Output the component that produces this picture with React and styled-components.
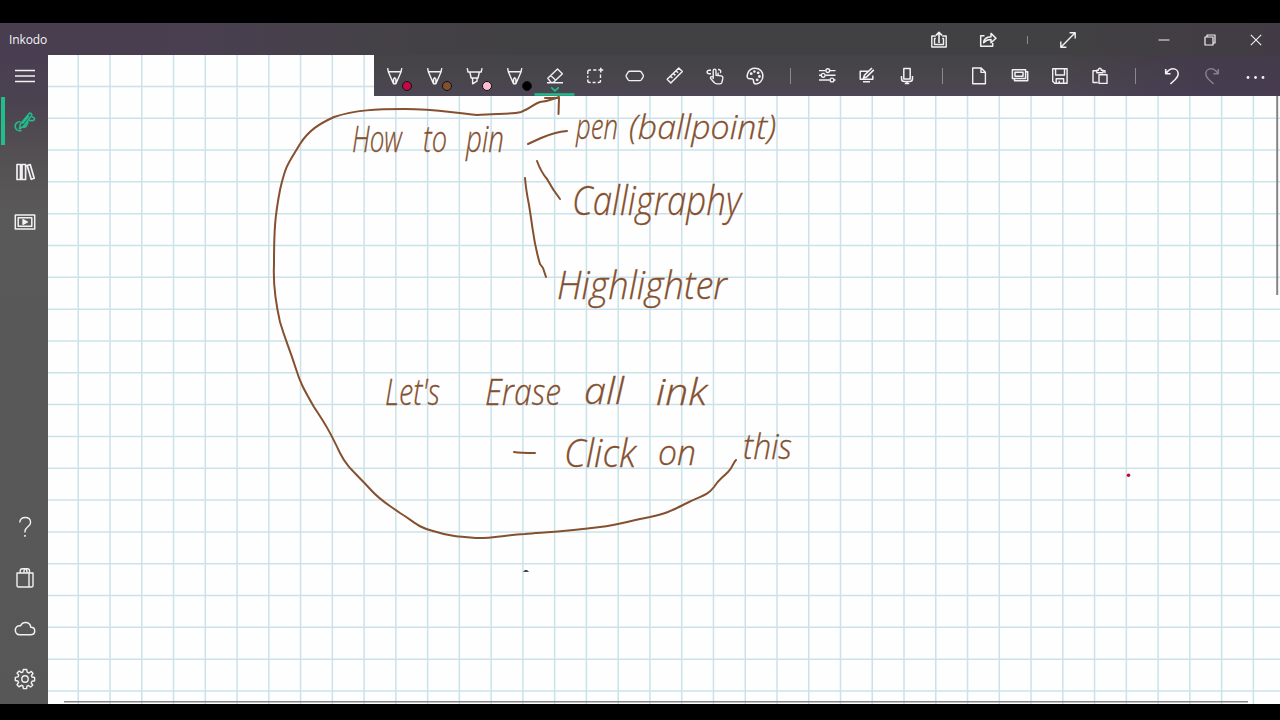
import styled, { createGlobalStyle } from 'styled-components'

const colors = {
  accent: '#22bd8d',
  ink: '#85502f',
  icon: '#f1f0f2',
  grid: '#cbe2ea',
}

const GlobalStyle = createGlobalStyle`
  body {
    margin: 0;
    background: #000;
    overflow: hidden;
  }
`

const Screen = styled.div`
  box-sizing: border-box;
  width: 1280px;
  height: 720px;
  padding: 23px 0 16px;
  display: flex;
  flex-direction: column;
  background: #000;
  font-family: 'Open Sans', 'Noto Sans', sans-serif;
`

const TitleBar = styled.header`
  display: flex;
  align-items: center;
  box-sizing: border-box;
  height: 32px;
  padding-top: 1px;
  flex: none;
  background: linear-gradient(90deg, #493d50 0, #493f50 200px, #454148 360px, #414042 520px, #414042 1080px, #423b45 1280px);
`

const AppName = styled.h1`
  flex: 1;
  margin: 0;
  padding: 0 0 0 9px;
  color: #f4f2f5;
  font-size: 12px;
  font-weight: 400;
  letter-spacing: -0.1px;
`

const WindowActions = styled.div`
  display: flex;
  align-items: center;
  margin-right: ${({ $gap }) => $gap || 0}px;
`

const Body = styled.div`
  display: flex;
  flex: 1;
  min-height: 0;
`

const Sidebar = styled.nav`
  display: flex;
  flex-direction: column;
  justify-content: space-between;
  box-sizing: border-box;
  width: 48px;
  flex: none;
  background: linear-gradient(180deg, #493e51 0, #4b4350 50px, #545153 105px, #5a5959 160px, #575757 100%);
`

const NavGroup = styled.div`
  display: flex;
  flex-direction: column;
`

const NavButton = styled.button`
  box-sizing: border-box;
  display: flex;
  align-items: center;
  justify-content: center;
  width: 48px;
  height: ${({ $height }) => $height || 51}px;
  padding: 0 2px 0 0;
  border: 0;
  border-left: 4px solid transparent;
  background: ${({ $active }) =>
    $active ? `linear-gradient(${colors.accent}, ${colors.accent}) 1px 1px / 4px 48px no-repeat border-box` : 'none'};
  color: ${({ $active }) => ($active ? colors.accent : colors.icon)};
`

const Canvas = styled.main`
  position: relative;
  flex: 1;
  min-width: 0;
  display: flex;
  justify-content: flex-end;
  align-items: flex-start;
  background: #fefefe;
`

const Page = styled.svg`
  position: absolute;
  inset: 0;
`

const Handwriting = styled.text`
  font-family: 'Open Sans', 'Lato', sans-serif;
  font-style: italic;
  font-weight: 300;
  font-size: ${({ $size }) => $size}px;
  fill: ${colors.ink};
  stroke: ${colors.ink};
  stroke-width: 0.3px;
`

const Toolbar = styled.div`
  position: relative;
  display: flex;
  align-items: center;
  box-sizing: border-box;
  width: 906px;
  height: 41px;
  padding-left: 1px;
  background: linear-gradient(90deg, transparent 680px, rgba(66, 48, 80, 0.45) 820px),
    linear-gradient(180deg, #444345 0, #48454b 50%, #4c4754 100%);
`

const ToolButton = styled.button`
  display: flex;
  align-items: center;
  justify-content: center;
  width: ${({ $width }) => $width || 40}px;
  height: 40px;
  flex: none;
  padding: 0;
  border: 0;
  background: none;
  color: ${({ $muted }) => ($muted ? '#85808a' : colors.icon)};
`

const Separator = styled.span`
  width: 1px;
  height: ${({ $height }) => $height || 16}px;
  flex: none;
  margin: 0 16px 0 15px;
  background: #8b888e;
`

const Glyph = styled.svg`
  flex: none;
  overflow: visible;
  fill: none;
  stroke: currentColor;
  stroke-width: 1.4;
  stroke-linejoin: round;
`

// every icon is drawn on a 40x40 board with its origin in the middle
function Icon({ children }) {
  return (
    <Glyph width="40" height="40" viewBox="-20 -20 40 40">
      {children}
    </Glyph>
  )
}

function Pen({ color }) {
  return (
    <Icon>
      <path d="M-7.4-7.8-6.6-4 -1.5 7.8H.9L6-4 6.8-7.8M-6.8-4.3H6.2M-1.5 7.5V3.2L-.3 1.8 .9 3.2V7.5" />
      <circle cx="12" cy="10" r="4.5" fill={color} stroke="#111" strokeWidth="1" />
    </Icon>
  )
}

function Marker({ color }) {
  return (
    <Icon>
      <path d="M-7.8-7.8-7-4H6.2L7-7.8M-5.2-4-3.8 2H3L4.4-4M-2.4 2V7.8L2 5.2V2" />
      <circle cx="12" cy="10" r="4.5" fill={color} stroke="#111" strokeWidth="1" />
    </Icon>
  )
}

const icons = {
  menu: <path d="M-10-5.500H10M-10 0H10M-10 5.500H10" />,
  ink: (
    <g strokeWidth="1.6">
      <path d="M-5.5 6.7-4.8 2.6 4-8.2C5.3-9.7 7.700-7.8 6.5-6.2L-2 4.8ZM-2.5 1.4 3.8-6" />
      <path d="M-4.5-.2C-8-.5-10 2-9.8 4.6-9.5 8-6.5 9.2-3.5 8.6M-2 5C1 6.2 1.7 3 3.2-.4M3.8-1.5C6-1.8 8.8-.5 9.4-2.2 10-4 8-5 6.8-5.2" />
    </g>
  ),
  library: <path d="M-8-7.500H-4.500V7.500H-8ZM-3-7.500H.6V7.500H-3ZM2.2-6.500 5.2-7.500 9.2 6.300 6.2 7.300Z" strokeWidth="1.7" />,
  video: (
    <>
      <path d="M-9.7-7H9.7V7H-9.7ZM-6.8-4.2H6.8V4.2H-6.8Z" strokeWidth="1.5" />
      <path d="M-2-2.3V2.3L2.5 0Z" fill="currentColor" />
    </>
  ),
  help: (
    <>
      <path d="M-5.3-4.5C-5-7.5-3-9.5.2-9.5 3.5-9.5 5.6-7.4 5.6-4.6 5.6-.8 0 .2 0 4V5.5" />
      <path d="M0 8V9.8" strokeWidth="1.6" />
    </>
  ),
  bag: <path d="M-8-5H8V7.500Q8 9 6.500 9H-6.500Q-8 9-8 7.500ZM4-5V9M-4.8-5V-7Q-4.800-9.200-2.800-9.200H2.5Q4.5-9.200 4.5-7V-5M-1-5V-7Q-1-9 .5-9.200M.8-9Q2-8.500 2-5" />,
  cloud: <path d="M-5.5 5.7H5.5C8 5.7 9.7 4.1 9.7 1.9S8-1.7 5.9-1.7C5.4-4.9 3-6.6.5-6.6-2-6.6-3.7-5.2-4.4-3.2-7.6-3.7-9.7-1.5-9.7 1.1S-7.9 5.7-5.5 5.7Z" strokeWidth="1.5" />,
  settings: (
    <>
      <path d="M-1.7-9.5H1.7L2.2-6.8 4-6 6.3-7.6 8-5.5 6.5-3.5 7-2 9.6-1.5V1.7L7 2.2 6.2 4 7.7 6.2 5.6 8 3.5 6.5 2 7.1 1.6 9.6H-1.6L-2.1 7-3.7 6.3-6 7.8-8 5.7-6.4 3.5-7.1 2-9.7 1.5V-1.6L-7-2.1-6.3-3.8-7.9-6-5.8-8-3.6-6.4-2.2-7Z" />
      <circle r="3.2" />
    </>
  ),
  export: (
    <>
      <path d="M-3.2-4H-7.2V7H7.2V-4H3.2M-3.2-1.5H-4.5V4.5H4.5V-1.5H3.2" />
      <path d="M0 3V-7.5M-3-4.6 0-7.6 3-4.6" strokeWidth="1.6" />
    </>
  ),
  share: <path d="M-3.5-4.3H-7.3V6.3H4.7V3M-4.4 2.7C-4.1-1.2-1.5-3.2 3-3.3V-6.6L8-1.8 3 2.8V-.4C-.2-.4-2.4.5-4.4 2.7Z" strokeWidth="1.5" />,
  expand: <path d="M-7.2 7.2 7.2-7.2M1.6-7.2H7.2V-1.6M-7.2 1.6V7.2H-1.6" />,
  minimize: <path d="M-5.5 0H5.5" strokeWidth="1" />,
  restore: <path d="M-5-3H3V5H-5ZM-3-3V-5H5V3H3" strokeWidth="1.2" />,
  close: <path d="M-5.2-5.2 5.2 5.2M5.2-5.2-5.2 5.2" strokeWidth="1.1" />,
  eraser: (
    <>
      <path d="M-7.2 2.3 2.5-7 7.4-2.2-1.7 6.4H-4ZM-4.4-.4.8 4.2M-8 6.7H8" />
      <path d="M-3.8 11.4 0 14.8 3.8 11.4" stroke={colors.accent} strokeWidth="1.6" />
      <path d="M-20.500 18.5H19.500" stroke={colors.accent} strokeWidth="2.5" />
    </>
  ),
  select: (
    <>
      <path d="M-7.2-2V-4.2Q-7.2-6-5.4-6H-4M-1.8-6H1.4M5.5-1.4V2M5.5 4V4.7Q5.5 6.5 3.7 6.5H2.7M.6 6.5H-2.4M-4.4 6.5H-5.4Q-7.2 6.5-7.2 4.7V3.6M-7.2 1.8V-.2" />
      <path d="M5.8-8.2V-3.5M3.5-5.9H8.2" strokeWidth="1.5" />
    </>
  ),
  shape: <path d="M-5.2-4.8H4.7Q5.7-4.8 6.3-4L8.2-.8Q8.6 0 8.2.8L6.3 3.8Q5.7 4.6 4.7 4.6H-5.2Q-6.2 4.6-6.8 3.8L-8.7.8Q-9.1 0-8.7-.8L-6.8-4Q-6.2-4.8-5.2-4.8Z" />,
  ruler: <path d="M-7.8 3.3 3.8-8 7.3-4.5-4.2 7ZM-4.5.2-2.5 2M-1.7-2.6.3-.6M1.1-5.2 3-3.3" strokeWidth="1.5" />,
  touch: (
    <path d="M-1.8 3V-5.3C-1.8-7.4 1-7.4 1-5.3V-.8L6-.1C7.6.1 8 .9 7.8 2.4L7 6.2Q6.6 7.9 4.9 7.9H1.8Q.3 7.9-.6 6.7L-4.3 2.5C-5.2 1.2-3.6.1-2.4 1M-4-2.3H-5.8C-8.6-2.3-8.6-5.8-5.8-5.8H-4M3-6.5H3.5C5.8-6.5 6.2-4.2 5.3-3M3.1-3.2V-.8" />
  ),
  palette: (
    <>
      <path d="M0-7.8C5-7.8 7.9-4.4 7.9-.2 7.9 4.8 4.2 7.9.9 7.9-2.2 7.9-1.2 5.3-1.7 3.8-2.4 1.6-4.5 3.2-6.3 2.6-8.1 2-8-.4-7.3-2.6-6.3-5.7-3.7-7.8 0-7.8Z" strokeWidth="1.5" />
      <g fill="currentColor" stroke="none">
        <circle cx="-3.8" cy="-2.3" r="1.4" />
        <circle cx="-.6" cy="-4.5" r="1.3" />
        <circle cx="3.2" cy="-3.2" r="1.4" />
        <circle cx="4.4" cy=".5" r="1.4" />
        <circle cx="2.2" cy="3.8" r="1.4" />
      </g>
    </>
  ),
  sliders: (
    <>
      <path d="M-8-5.4H-1.5M3-5.4H8.5M-8-.7H-5.5M-1.5-.7H8.5M-8 4H2.7M7 4H8.5" />
      <circle cx=".8" cy="-5.4" r="1.9" />
      <circle cx="-3.8" cy="-.7" r="1.9" />
      <circle cx="5" cy="4" r="1.9" />
    </>
  ),
  screenPen: (
    <>
      <path d="M1.5-4.8H-6.8V3.3H5.8V-.5M-4 5.7H3" strokeWidth="1.5" />
      <path d="M6.8-6.2-.4 1-3.6 2.2-2.4-1 5-8" strokeWidth="1.7" />
    </>
  ),
  mic: <path d="M-3.2-7.5H3.2V3H-3.2ZM-5.5 0V2.5Q-5.5 5.6-2.5 5.6H2.5Q5.5 5.6 5.5 2.5V0M-2.2 7.6H2.2M0 5.6V7.6" strokeWidth="1.5" />,
  file: <path d="M-6.3-8H2.2L6.4-3.8V7.7H-6.3ZM2-8V-3.6H6.3" />,
  layers: <path d="M-7.6-6.2H5.6V2.6H-7.6ZM-5-3.8H3V.2H-5ZM5.6-4.3H7.7V4.8H-5.5V2.6" strokeWidth="1.5" />,
  save: <path d="M-7.3-7.2H7.1V7.2H-5.3L-7.3 5.2ZM-4.4-7V-1H4.5V-7M-3.8 7V2.8H3.6V7M-.8 4.8V7" />,
  paste: <path d="M-2.2 6.5H-7V-5.2H-3.2M3-5.2H5V-2.8M-3.2-3.2V-5.8H-1.6C-1.6-8.4 1.3-8.4 1.3-5.8H3V-3.2ZM-1-1.3H7V7.4H-1Z" />,
  undo: <path d="M-6.300-7V-2.300H-1.4M-6-2.500C-3.7-5.8-1.5-7.2 1-7.2 4-7.2 6.2-5.1 6.2-2.1 6.2.5 4.8 1.9 3.2 3.5L-1.6 8" strokeWidth="1.6" />,
  redo: <path d="M6.3-7V-2.3H1.4M6-2.5C3.7-5.8 1.5-7.2-1-7.2-4-7.2-6.2-5.1-6.2-2.1-6.2.5-4.8 1.9-3.2 3.5L1.6 8" strokeWidth="1.5" />,
  more: (
    <g fill="currentColor" stroke="none">
      <circle cx="-8" cy="1.5" r="1.4" />
      <circle cx="-.5" cy="1.5" r="1.4" />
      <circle cx="7" cy="1.5" r="1.4" />
    </g>
  ),
}

// x is the left edge of a word, w the width it was written in
const words = [
  { text: 'How', x: 352, y: 152, w: 50, size: 36 },
  { text: 'to', x: 423, y: 152, w: 24, size: 36 },
  { text: 'pin', x: 466, y: 152, w: 38, size: 36 },
  { text: 'pen', x: 576, y: 139, w: 42, size: 35 },
  { text: '(ballpoint)', x: 629, y: 139, w: 147, size: 33 },
  { text: 'Calligraphy', x: 572, y: 215, w: 169, size: 41 },
  { text: 'Highlighter', x: 557, y: 299, w: 170, size: 38 },
  { text: "Let's", x: 385, y: 405, w: 55, size: 36 },
  { text: 'Erase', x: 485, y: 405, w: 76, size: 36 },
  { text: 'all', x: 584, y: 404, w: 40, size: 37 },
  { text: 'ink', x: 656, y: 405, w: 51, size: 36 },
  { text: 'Click', x: 564, y: 467, w: 72, size: 39 },
  { text: 'on', x: 658, y: 465, w: 38, size: 35 },
  { text: 'this', x: 743, y: 459, w: 49, size: 35 },
]

const strokes = [
  'M736 460C732 464 734 466 728 472C720 480 719 479 714 487C706 497 702 495 687 503C671 511 668 513 650 517C628 521 620 525 600 527C570 531 550 532 525 534C505 535 495 538 478 538C462 537 452 537 433 531C417 527 415 522 400 513C386 503 381 501 371 490C355 472 348 469 340 453C330 432 326 425 314 407C303 388 300 382 296 369C289 347 286 342 280 322C275 300 273 285 274 265C274 230 275 216 280 190C286 164 288 164 300 144C309 130 319 124 334 117C355 110 376 109 405 109C433 109 446 112 477 115C493 113 510 115 521 112C532 108 533 104 540 102C549 101 553 99 559 97',
  'M545 98L559 98L558.5 114',
  'M528 144L541 138Q555 132 567 131',
  'M537 161Q541 172 547 179Q553 190 560 199',
  'M525 178Q526 190 529 205C534 235 533 241 540 264L543 268L546 277',
  'M514 452Q520 453 535 453',
]

function InkPage() {
  const columns = Array.from({ length: 39 }, (_, i) => 46.5 + i * 31.76)
  const rows = Array.from({ length: 20 }, (_, i) => 86.4 + i * 31.82)

  return (
    <Page width="1232" height="649" viewBox="48 55 1232 649">
      <g stroke={colors.grid} strokeWidth="1.5">
        {columns.map((x) => (
          <line key={x} x1={x} x2={x} y1="55" y2="704" />
        ))}
        {rows.map((y) => (
          <line key={y} x1="48" x2="1280" y1={y} y2={y} />
        ))}
      </g>
      <path d="M64 701.7H1248" stroke="#858585" strokeWidth="1.6" />
      {words.map(({ text, x, y, w, size }) => (
        <Handwriting key={text} x={x} y={y} textLength={w} lengthAdjust="spacingAndGlyphs" $size={size}>
          {text}
        </Handwriting>
      ))}
      <g fill="none" stroke={colors.ink} strokeWidth="2" strokeLinecap="round" strokeLinejoin="round">
        {strokes.map((d) => (
          <path key={d} d={d} />
        ))}
      </g>
      <circle cx="1128.5" cy="475.3" r="1.8" fill="#c00836" />
      <path d="M523 571.8Q526 568 529 571.8Z" fill="#111" />
      <path d="M1277.2 95V295" stroke="#858585" strokeWidth="2" />
    </Page>
  )
}

function App() {
  return (
    <Screen>
      <GlobalStyle />
      <TitleBar>
        <AppName>Inkodo</AppName>
        <WindowActions $gap={49}>
          <ToolButton $width={48}><Icon>{icons.export}</Icon></ToolButton>
          <ToolButton $width={49}><Icon>{icons.share}</Icon></ToolButton>
          <Separator $height={8} />
          <ToolButton $width={48}><Icon>{icons.expand}</Icon></ToolButton>
        </WindowActions>
        <WindowActions $gap={1}>
          <ToolButton $width={46}><Icon>{icons.minimize}</Icon></ToolButton>
          <ToolButton $width={46}><Icon>{icons.restore}</Icon></ToolButton>
          <ToolButton $width={46}><Icon>{icons.close}</Icon></ToolButton>
        </WindowActions>
      </TitleBar>
      <Body>
        <Sidebar>
          <NavGroup>
            <NavButton $height={41}><Icon>{icons.menu}</Icon></NavButton>
            <NavButton $active><Icon>{icons.ink}</Icon></NavButton>
            <NavButton $height={49}><Icon>{icons.library}</Icon></NavButton>
            <NavButton><Icon>{icons.video}</Icon></NavButton>
          </NavGroup>
          <NavGroup>
            <NavButton><Icon>{icons.help}</Icon></NavButton>
            <NavButton><Icon>{icons.bag}</Icon></NavButton>
            <NavButton><Icon>{icons.cloud}</Icon></NavButton>
            <NavButton $height={50}><Icon>{icons.settings}</Icon></NavButton>
          </NavGroup>
        </Sidebar>
        <Canvas>
          <InkPage />
          <Toolbar>
            <ToolButton><Pen color="#c40843" /></ToolButton>
            <ToolButton><Pen color="#80512f" /></ToolButton>
            <ToolButton><Marker color="#ffbdd3" /></ToolButton>
            <ToolButton><Pen color="#000" /></ToolButton>
            <ToolButton><Icon>{icons.eraser}</Icon></ToolButton>
            <ToolButton><Icon>{icons.select}</Icon></ToolButton>
            <ToolButton><Icon>{icons.shape}</Icon></ToolButton>
            <ToolButton><Icon>{icons.ruler}</Icon></ToolButton>
            <ToolButton><Icon>{icons.touch}</Icon></ToolButton>
            <ToolButton><Icon>{icons.palette}</Icon></ToolButton>
            <Separator />
            <ToolButton><Icon>{icons.sliders}</Icon></ToolButton>
            <ToolButton><Icon>{icons.screenPen}</Icon></ToolButton>
            <ToolButton><Icon>{icons.mic}</Icon></ToolButton>
            <Separator />
            <ToolButton><Icon>{icons.file}</Icon></ToolButton>
            <ToolButton $width={41}><Icon>{icons.layers}</Icon></ToolButton>
            <ToolButton><Icon>{icons.save}</Icon></ToolButton>
            <ToolButton><Icon>{icons.paste}</Icon></ToolButton>
            <Separator />
            <ToolButton><Icon>{icons.undo}</Icon></ToolButton>
            <ToolButton $muted><Icon>{icons.redo}</Icon></ToolButton>
            <ToolButton $width={48}><Icon>{icons.more}</Icon></ToolButton>
          </Toolbar>
        </Canvas>
      </Body>
    </Screen>
  )
}

export default App
